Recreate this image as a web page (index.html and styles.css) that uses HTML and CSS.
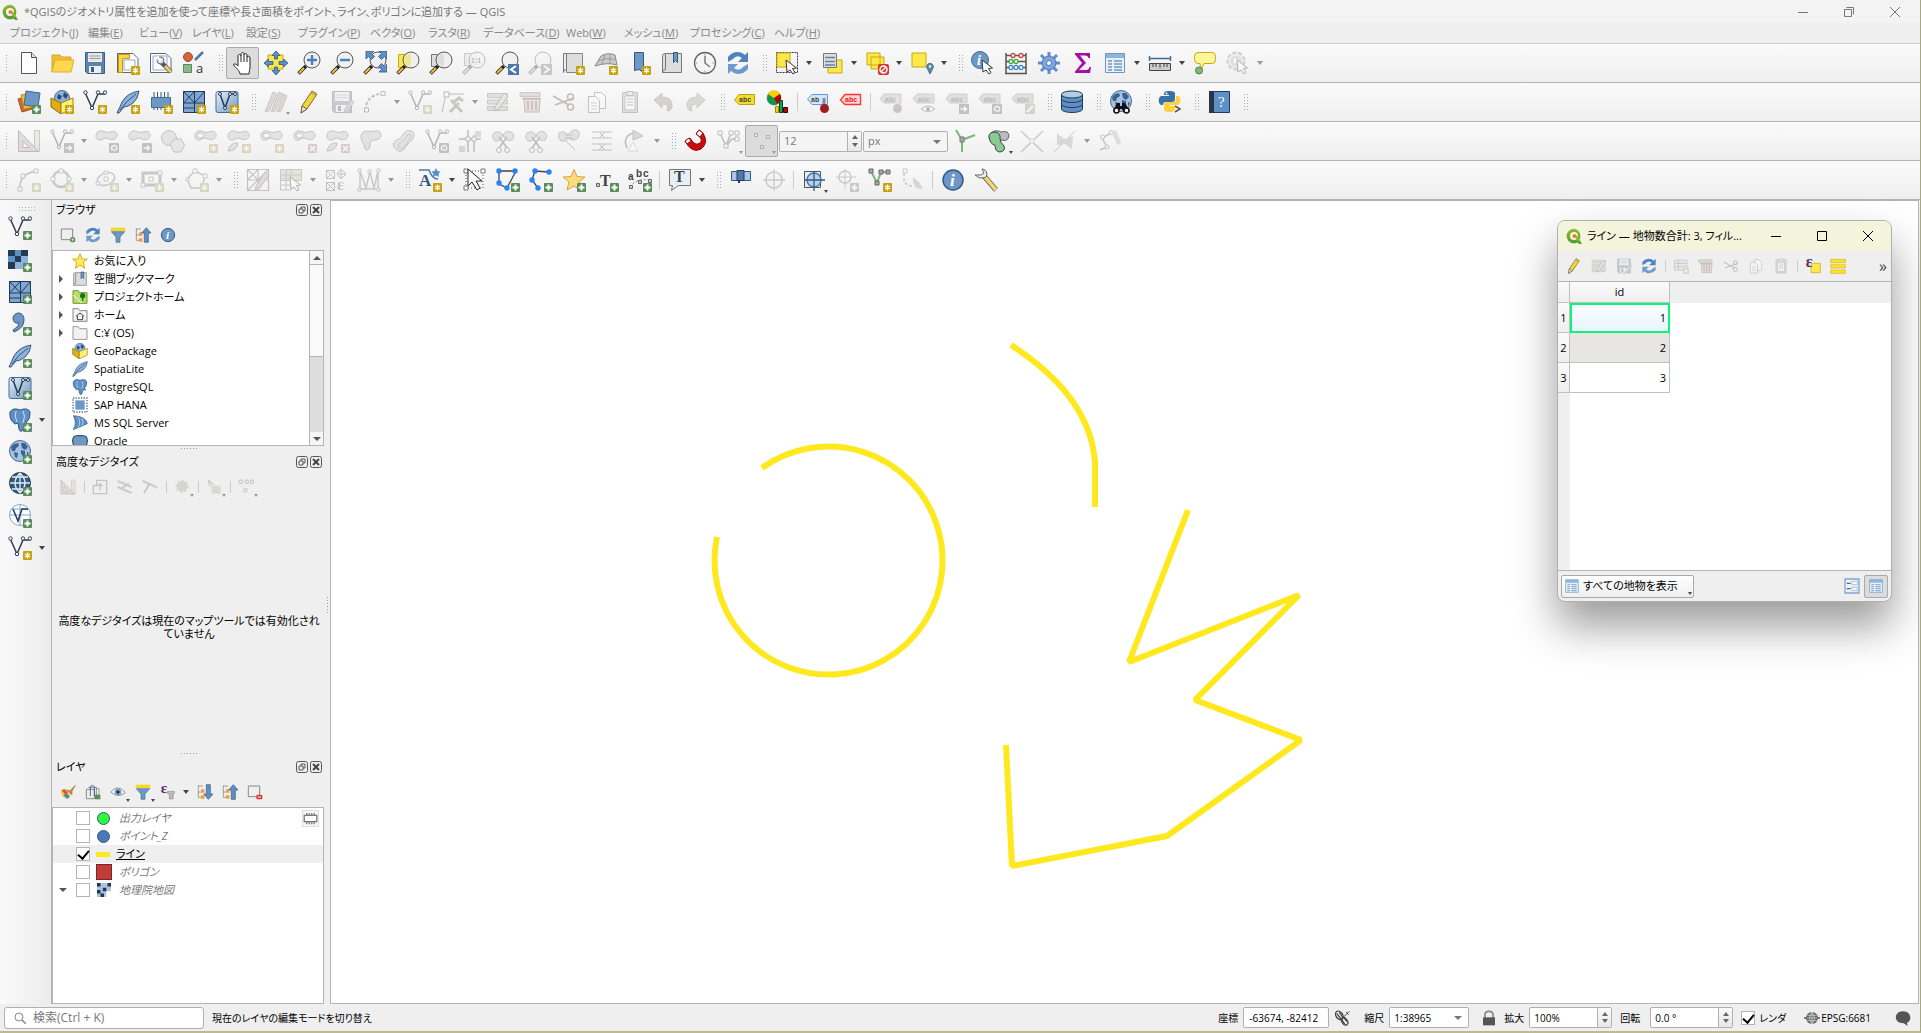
FILE: index.html
```
<!DOCTYPE html>
<html lang="ja">
<head>
    <meta charset="UTF-8">
    <meta name="viewport" content="width=device-width, initial-scale=1.0">
    <title>QGIS</title>
    <link rel="stylesheet" href="styles.css">
</head>
<body>
<svg class="gradients" aria-hidden="true">
    <defs>
        <linearGradient id="qg" x1="0" y1="0" x2="0" y2="1"><stop offset="0" stop-color="#8fb935"/><stop offset="1" stop-color="#4f9a35"/></linearGradient>
        <linearGradient id="bl" x1="0" y1="0" x2="1" y2="1"><stop offset="0" stop-color="#e8f0f8"/><stop offset="1" stop-color="#6d97c4"/></linearGradient>
    </defs>
</svg>
<svg class="sprite" aria-hidden="true">
    <!-- badges and shared parts -->
    <symbol id="b-new" viewBox="0 0 24 24"><rect x="15" y="15" width="9" height="9" rx="1" fill="#c8a20a"/><path d="M19.5 16.5v6M16.9 18l5.2 3M22.1 18l-5.2 3" stroke="#fff" stroke-width="1.3"/></symbol>
    <symbol id="b-add" viewBox="0 0 24 24"><rect x="15" y="15" width="9" height="9" rx="1" fill="#5a8c5a"/><path d="M19.5 16.5v6M16.5 19.5h6" stroke="#fff" stroke-width="2"/></symbol>
    <symbol id="b-go" viewBox="0 0 24 24"><rect x="14" y="14" width="10" height="10" rx="1" fill="#666"/><path d="M15.5 19h6M19 16.5l2.5 2.5-2.5 2.5" stroke="#fff" stroke-width="1.5" fill="none"/></symbol>
    <symbol id="b-rot" viewBox="0 0 24 24"><rect x="14" y="14" width="10" height="10" rx="1" fill="#666"/><path d="M17 20.5a2.6 2.6 0 1 1 2 1.2M16 18l1 3 2.5-1" stroke="#fff" stroke-width="1.3" fill="none"/></symbol>
    <symbol id="b-del" viewBox="0 0 24 24"><rect x="15" y="15" width="9" height="9" rx="1" fill="#c77"/><path d="M17 17l5 5M22 17l-5 5" stroke="#fff" stroke-width="1.6"/></symbol>
    <symbol id="cursor" viewBox="0 0 24 24"><path d="M11 9l1 12 3-2 3 4 2-1.5-2.5-4 4-.5z" fill="#fff" stroke="#333"/></symbol>
    <symbol id="vee" viewBox="0 0 24 24"><path d="M2.500 3.5L9 18l6-14h7" fill="none" stroke="#2b3b4e" stroke-width="1.5"/><g fill="#fff" stroke="#2b3b4e"><circle cx="2.5" cy="2.5" r="1.7"/><circle cx="9" cy="18" r="1.7"/><circle cx="15" cy="2.5" r="1.7"/><circle cx="22" cy="2.5" r="1.7"/></g></symbol>
    <symbol id="mag" viewBox="0 0 24 24"><path d="M9 15l-7.5 7.5" stroke="#222" stroke-width="3.5"/><path d="M7 17l-5 5" stroke="#f5c03c" stroke-width="2"/><circle cx="15" cy="9" r="8" fill="#eee" fill-opacity=".85" stroke="#555"/></symbol>
    <symbol id="blob" viewBox="0 0 24 24"><path d="M1 7C1 2 6 1 9 2.5s5 1 8 0 6 2 5 5-5 4-8 2.5-4-1-7 .5S1 11 1 7z" fill="#b9c4b9" stroke="#666"/></symbol>
    <symbol id="tagged" viewBox="0 0 24 24"><path d="M1 8.5L5 4h17v9H5z" fill="#b9b79c" stroke="#888"/><text x="6" y="11.5" class="abc">abc</text></symbol>

    <symbol id="logo" viewBox="0 0 24 24"><path fill="url(#qg)" fill-rule="evenodd" d="M12 1a11 11 0 1 0 5 20.8L20 24h4l-4-6.500A11 11 0 0 0 12 1zm0 5a6 6 0 1 1 0 12 6 6 0 0 1 0-12z"/><path d="M11 10h4l7 9-4 1z" fill="#8fb935"/><circle cx="12.5" cy="12" r="2.8" fill="#ee7913"/></symbol>

    <!-- project -->
    <symbol id="new" viewBox="0 0 24 24"><path d="M4.500 1.5h10l5 5v16h-15z" fill="#fff" stroke="#555"/><path d="M14.5 1.5v5h5" fill="#ddd" stroke="#555"/></symbol>
    <symbol id="open" viewBox="0 0 24 24"><path d="M2 21V4h8l2 2h9v3" fill="#f0bb35" stroke="#d9a520"/><path d="M2 21L5 9h19l-3 12z" fill="#ffd84f" stroke="#e0ad28"/></symbol>
    <symbol id="save" viewBox="0 0 24 24"><path d="M2.500 1.5h19v21h-17l-2-2z" fill="#5d84b0" stroke="#3d5e85"/><path d="M5 2h14v9H5z" fill="#e8e8e8"/><path d="M6.500 5h11M6.500 7.500h11" stroke="#999"/><path d="M6 15h12v7H6z" fill="#eee"/><path d="M8 16h3v5H8z" fill="#3d5e85"/></symbol>
    <symbol id="layout" viewBox="0 0 24 24"><path d="M1.500 2.500H17l5 5v14H1.500z" fill="#fff" stroke="#666"/><path d="M8 9h11v10H8z" fill="none" stroke="#8aa8e0"/><path d="M2.500 3.500h11v4h-7v14h-4z" fill="#fbd54a" stroke="#c79b12"/><use href="#b-new"/></symbol>
    <symbol id="layouts" viewBox="0 0 24 24"><path d="M1.500 2.500H17l5 5v14H1.500z" fill="#fff" stroke="#666"/><path d="M4 5h14v14H4z" fill="none" stroke="#8aa8e0"/><path d="M12 11l10 10" stroke="#555" stroke-width="4.5"/><path d="M16 15l6 6" stroke="#f0cf60" stroke-width="3"/><circle cx="11.5" cy="9.5" r="3.5" fill="#ddd" stroke="#666"/><path d="M8 6l4 4" stroke="#fff" stroke-width="2.5"/></symbol>
    <symbol id="style" viewBox="0 0 24 24"><circle cx="6" cy="6" r="4.5" fill="#d0683a" stroke="#a84a22"/><path d="M13 9l8-8" stroke="#4f78a8" stroke-width="2.5"/><path d="M1.500 13.500h8v8h-8z" fill="#8db88d" stroke="#5a8c5a"/><text x="14" y="22" class="letter">a</text></symbol>
    <symbol id="hand" viewBox="0 0 24 24"><path d="M9 23c0-3-4-6-6.500-9 0-2 3-1 4.500 1V5c0-2 2.500-2 3 0V3c.5-2 3-2 3 0v1c.5-2 3-2 3 0v2c1-1.500 3-1 3 1v9c0 3-1 4-1 7z" fill="#fff" stroke="#222"/><path d="M10 5v6M13 4v7M16 6v5" stroke="#222"/></symbol>
    <symbol id="pansel" viewBox="0 0 24 24"><path d="M4 4h15v14H4z" fill="#fde84a" stroke="#c9a90c"/><g fill="#5e8fc6" stroke="#32587f" stroke-width=".8"><path d="M12 0l4 4.500h-2.500V8h-3V4.500H8zM12 24l4-4.500h-2.500V16h-3v3.500H8zM0 12l4.500-4v2.500H9v3H4.500V16zM24 12l-4.500-4v2.500H15v3h4.500V16z"/></g></symbol>
    <symbol id="zin" viewBox="0 0 24 24"><use href="#mag"/><path d="M15 4v10M10 9h10" stroke="#4f7fb8" stroke-width="2.5"/></symbol>
    <symbol id="zout" viewBox="0 0 24 24"><use href="#mag"/><path d="M10 9h10" stroke="#4f7fb8" stroke-width="2.5"/></symbol>
    <symbol id="zfull" viewBox="0 0 24 24"><use href="#mag"/><g fill="#5e8fc6" stroke="#32587f" stroke-width=".8"><path d="M3 0h8L8.500 2.500l3 3-3 3-3-3L3 8zM24 0v8l-2.500-2.500-3 3-3-3 3-3L16 0zM24 21h-8l2.500-2.500-3-3 3-3 3 3L24 13z"/></g></symbol>
    <symbol id="zsel" viewBox="0 0 24 24"><path d="M2.500 3.500h12v13h-12z" fill="#fde84a" stroke="#c9a90c"/><use href="#mag"/><path d="M10 4h4.500v10H10l-2-5z" fill="#efe68e"/></symbol>
    <symbol id="zlay" viewBox="0 0 24 24"><path d="M2.500 3.500h12v12h-12z" fill="#ddd" stroke="#777"/><use href="#mag"/><path d="M10 4h4.500v10H10l-2-5z" fill="#ddd"/></symbol>
    <symbol id="znat" viewBox="0 0 24 24"><path d="M2.500 2.500h12v12h-12z" fill="#ddd" stroke="#777"/><use href="#mag"/><text x="9" y="12" class="abc">1:1</text></symbol>
    <symbol id="zlast" viewBox="0 0 24 24"><use href="#mag"/><path d="M13 13h11v11H13z" fill="#4f78a8"/><path d="M21 15l-5 3.500 5 3.500" stroke="#fff" stroke-width="2" fill="none"/></symbol>
    <symbol id="znext" viewBox="0 0 24 24"><use href="#mag"/><path d="M13 13h11v11H13z" fill="#777"/><path d="M16 15l5 3.500-5 3.500" stroke="#fff" stroke-width="2" fill="none"/></symbol>
    <symbol id="mapnew" viewBox="0 0 24 24"><path d="M5.500 2.500h16v19h-16z" fill="#ddd" stroke="#888"/><path d="M2.500 2.500h3v16q-3 0-3 3z" fill="#eee" stroke="#777"/><use href="#b-new"/></symbol>
    <symbol id="map3d" viewBox="0 0 24 24"><path d="M1 15L7 5q7-4 14-1l2 10q-10-3-22 1z" fill="#ccc" stroke="#888"/><path d="M4 10q9-4 18-1M11 3L8 13M16 3l0 10" fill="none" stroke="#999"/><use href="#b-new"/></symbol>
    <symbol id="bmnew" viewBox="0 0 24 24"><path d="M7.500 1.500h9v20l-4.500-3-4.500 1z" fill="#6d97c4" stroke="#32587f"/><use href="#b-new"/></symbol>
    <symbol id="bms" viewBox="0 0 24 24"><path d="M5.500 2.500h16v19h-19v-17q0-2 3-2z" fill="#ddd" stroke="#777"/><path d="M5.500 2.500v16q-3 0-3 3" fill="none" stroke="#777"/><path d="M13.500 1.500h4v10l-2-2-2 2z" fill="#6d97c4" stroke="#32587f"/></symbol>
    <symbol id="clock" viewBox="0 0 24 24"><circle cx="12" cy="12" r="10.5" fill="#f4f4f4" stroke="#666" stroke-width="1.3"/><path d="M12 5v7l5 4" fill="none" stroke="#777" stroke-width="1.5"/><path d="M12 2.500v2M12 19.500v2M2.500 12h2M19.500 12h2" stroke="#999"/></symbol>
    <symbol id="refresh" viewBox="0 0 24 24"><path d="M2 11V6q6-7 14-4l3 2 3-3v10H12l4-4q-5-4-9 1z" fill="#4f83bd"/><path d="M22 13v5q-6 7-14 4l-3-2-3 3V13h10l-4 4q5 4 9-1z" fill="#6d9bcd"/></symbol>
    <symbol id="select" viewBox="0 0 24 24"><path d="M1.500 1.500h21v20h-21z" fill="none" stroke="#333" stroke-dasharray="2 1"/><path d="M2 2h13v14H2z" fill="#fde84a" stroke="#c9a90c"/><use href="#cursor"/></symbol>
    <symbol id="selform" viewBox="0 0 24 24"><path d="M8 9h14v13H8z" fill="#fde84a" stroke="#c9a90c"/><path d="M3.500 2.500h13v14h-13z" fill="#ddd" stroke="#777"/><path d="M5 6.500h10M5 10.500h10M5 14h10" stroke="#5d84b0" stroke-width="1.4"/></symbol>
    <symbol id="desel" viewBox="0 0 24 24"><path d="M2 2h13v12H2zM6 6h13v12H6z" fill="#fde84a" stroke="#c9a90c"/><rect x="13" y="13" width="11" height="11" rx="2" fill="#d33"/><circle cx="18.5" cy="18.5" r="3.5" fill="none" stroke="#fff" stroke-width="1.5"/><path d="M16 21l5-5" stroke="#fff" stroke-width="1.5"/></symbol>
    <symbol id="selloc" viewBox="0 0 24 24"><path d="M2 2h14v14H2z" fill="#fde84a" stroke="#c9a90c"/><path d="M20 23l-3-6a3.300 3.300 0 1 1 6 0z" fill="#5c87a5" stroke="#46708e"/><circle cx="20" cy="15.5" r="1.2" fill="#fff"/></symbol>
    <symbol id="ident" viewBox="0 0 24 24"><circle cx="9" cy="9" r="8.5" fill="#6d97c4" stroke="#456c98"/><text x="6" y="14" class="info">i</text><use href="#cursor"/></symbol>
    <symbol id="abacus" viewBox="0 0 24 24"><path d="M2 2v20M22 2v20M1 22.500h22M2 4.500h20M2 10.500h20M2 16.500h20" stroke="#555" stroke-width="1.5"/><g fill="#fff" stroke-width="1.3"><circle cx="9" cy="4.500" r="2" stroke="#c44"/><circle cx="17" cy="4.500" r="2" stroke="#c44"/><circle cx="7" cy="10.500" r="2" stroke="#4a4"/><circle cx="12" cy="10.500" r="2" stroke="#4a4"/><circle cx="7" cy="16.500" r="2" stroke="#48c"/><circle cx="12" cy="16.500" r="2" stroke="#48c"/><circle cx="17" cy="16.500" r="2" stroke="#48c"/></g></symbol>
    <symbol id="gear" viewBox="0 0 24 24"><path d="M12 1v22M1 12h22M4 4l16 16M20 4L4 20" stroke="#5f8ccc" stroke-width="3"/><circle cx="12" cy="12" r="7" fill="#7ea6dc" stroke="#4878b8"/><circle cx="12" cy="12" r="2.5" fill="#fff" stroke="#4878b8"/></symbol>
    <symbol id="sigma" viewBox="0 0 24 24"><path d="M5 2h15v5h-1.500q-.5-2.500-3-2.500H10l6 7.500-7 7h7q3 0 3.500-3H21l-1 6H5v-1.500L12 12 5 3.500z" fill="#a50fa5"/></symbol>
    <symbol id="table" viewBox="0 0 24 24"><path d="M2.500 2.500h19v19h-19z" fill="#e8f1fa" stroke="#6d97c4"/><path d="M3 3h18v4H3z" fill="#8cb6e0"/><path d="M5 10h4M5 13h4M5 16h4M5 19h4M11 10h8M11 13h8M11 16h8M11 19h8" stroke="#6d97c4" stroke-width="1.3"/></symbol>
    <symbol id="measure" viewBox="0 0 24 24"><path d="M1.500 7.500h21M1.500 5v5M22.500 5v5" stroke="#456c98" stroke-width="1.5" fill="none"/><path d="M1.500 12.500h21v7h-21z" fill="#ccc" stroke="#444"/><path d="M5 13v3M8 13v3M12 13v4M16 13v3M19 13v3" stroke="#444"/></symbol>
    <symbol id="tip" viewBox="0 0 24 24"><path d="M5 1.500h14q3.500 0 3.500 4v3q0 4-3.500 4h-8l-3 7-1-7H5q-3.500 0-3.500-4v-3q0-4 3.500-4z" fill="#fff59a" stroke="#c9a90c"/><circle cx="6" cy="19.5" r="3.5" fill="#82b982" stroke="#4d7a4d"/></symbol>
    <symbol id="action" viewBox="0 0 24 24"><circle cx="10" cy="10" r="8.5" fill="#ddd" stroke="#888" stroke-width="2" stroke-dasharray="4 2"/><circle cx="10" cy="10" r="5.5" fill="#a9b8c8"/><path d="M8 7l5 3-5 3z" fill="#fff"/><use href="#cursor"/></symbol>

    <!-- layers and editing -->
    <symbol id="source" viewBox="0 0 24 24"><path d="M1 9l10-3 4 13-10 3z" fill="#d0683a" stroke="#a04a20"/><path d="M4 5l11-2 2 14-10 2z" fill="#f0c030" stroke="#b98f10"/><path d="M9 1l14 2-2 14-14-2z" fill="#6d97c4" stroke="#3f678f"/><use href="#b-add"/></symbol>
    <symbol id="gpkgbox" viewBox="0 0 24 24"><circle cx="12" cy="8" r="7.5" fill="#8fb2dc" stroke="#456c98"/><path d="M8 4l4 2-2 4-3-2zM14 2l4 3-2 4-3-3z" fill="#2b4a70"/><path d="M1 8l10 5v11L1 17z" fill="#e0b010" stroke="#8a6d08"/><path d="M11 13l12-5v10l-12 6z" fill="#fdf07a" stroke="#a5880c"/></symbol>
    <symbol id="gpkg" viewBox="0 0 24 24"><use href="#gpkgbox"/><use href="#b-new"/></symbol>
    <symbol id="vnew" viewBox="0 0 24 24"><use href="#vee"/><use href="#b-new"/></symbol>
    <symbol id="vadd" viewBox="0 0 24 24"><use href="#vee"/><use href="#b-add"/></symbol>
    <symbol id="quill" viewBox="0 0 24 24"><path d="M1 23Q4 17 6 12 11 3 23 1q-1 8-6 12-5 4-9 4l-5 6z" fill="#8fb2dc" stroke="#32587f"/><path d="M4 20Q9 12 20 4" fill="none" stroke="#32587f"/></symbol>
    <symbol id="quillnew" viewBox="0 0 24 24"><use href="#quill"/><use href="#b-new"/></symbol>
    <symbol id="quilladd" viewBox="0 0 24 24"><use href="#quill"/><use href="#b-add"/></symbol>
    <symbol id="chip" viewBox="0 0 24 24"><path d="M5 2v18M8.500 2v18M12 2v18M15.500 2v18M19 2v18" stroke="#32587f"/><path d="M2.500 7.500h19v10h-19z" fill="#6d97c4" stroke="#456c98"/><use href="#b-new"/></symbol>
    <symbol id="meshbase" viewBox="0 0 24 24"><path d="M1.500 1.500h21v21h-21z" fill="#7ea6d4" stroke="#223a55"/><path d="M1.500 13h21M12.500 1.500v21M1.500 18h11M1.500 1.500l11 11.500M12.500 1.500L1.500 13M22.500 1.500l-10 11.500" stroke="#223a55" fill="none"/></symbol>
    <symbol id="mesh" viewBox="0 0 24 24"><use href="#meshbase"/><use href="#b-new"/></symbol>
    <symbol id="meshadd" viewBox="0 0 24 24"><use href="#meshbase"/><use href="#b-add"/></symbol>
    <symbol id="vboxb" viewBox="0 0 24 24"><rect x="1" y="1.5" width="22" height="21" rx="2" fill="url(#bl)" stroke="#456c98"/><path d="M5 4l5 14 5-14h6" fill="none" stroke="#223a55" stroke-width="1.5"/><g fill="#fff" stroke="#223a55"><circle cx="5" cy="4" r="1.5"/><circle cx="10" cy="18" r="1.5"/><circle cx="15" cy="4" r="1.5"/><circle cx="20" cy="4" r="1.5"/></g></symbol>
    <symbol id="vbox" viewBox="0 0 24 24"><use href="#vboxb"/><use href="#b-new"/></symbol>
    <symbol id="vboxadd" viewBox="0 0 24 24"><use href="#vboxb"/><use href="#b-add"/></symbol>
    <symbol id="pencil" viewBox="0 0 24 24"><path d="M5 16L15 1l5 3-10 15-6 4z" fill="#efd63c" stroke="#7c6a2a"/><path d="M5 16l5 3-6 4z" fill="#f2e0c0" stroke="#666"/><path d="M14 2.500l5 3" stroke="#c8a850" stroke-width="2"/></symbol>
    <symbol id="pencils" viewBox="0 0 24 24"><path d="M1 22L9 2l4 2-8 17zM7 22l8-20 4 2-8 17zM13 22l7-18 3 2-6 15z" fill="#c99a8f" stroke="#777"/></symbol>
    <symbol id="saveedit" viewBox="0 0 24 24"><use href="#save"/><path d="M14 23l1-4 6-9 3 2-6 9z" fill="#d3a090" stroke="#777"/></symbol>
    <symbol id="arc" viewBox="0 0 24 24"><path d="M3 20Q2 6 20 3" fill="none" stroke="#555" stroke-width="2" stroke-dasharray="3 2"/><path d="M1.500 18h4v4h-4zM18 1.500h4v4h-4z" fill="#fff" stroke="#555"/></symbol>
    <symbol id="node" viewBox="0 0 24 24"><path d="M1 22L5 4h18" fill="none" stroke="#555"/><path d="M3 2h5v5H3z" fill="#fff" stroke="#444"/><path d="M9 22l9-9M10 10l11 12" stroke="#776" stroke-width="3"/><path d="M13 12l5-4 4 3" stroke="#776" stroke-width="3" fill="none"/></symbol>
    <symbol id="rows" viewBox="0 0 24 24"><path d="M1.500 3.500h20v4h-20zM1.500 10h20v4h-20zM1.500 16.500h20v4h-20z" fill="#c9c08a" stroke="#777"/><path d="M8 21l1-4 9-14 4 3-9 13z" fill="#ccc" stroke="#555"/></symbol>
    <symbol id="trash" viewBox="0 0 24 24"><path d="M1 2.500h20v4H1z" fill="#d8a8a0" stroke="#876"/><path d="M5 9h16l-1 13H6z" fill="#e8b8b0" stroke="#944"/><path d="M3 8.500h19M9 11v9M13 11v9M17 11v9" stroke="#944" stroke-width="1.5"/></symbol>
    <symbol id="cut" viewBox="0 0 24 24"><path d="M1 6l16 9M3 15L22 8" stroke="#555" stroke-width="1.5"/><circle cx="18.5" cy="7" r="3" fill="none" stroke="#944" stroke-width="1.5"/><circle cx="18.5" cy="17" r="3" fill="none" stroke="#944" stroke-width="1.5"/></symbol>
    <symbol id="copy" viewBox="0 0 24 24"><path d="M9.500 2.500h7l4 4v12h-11z" fill="#fff" stroke="#666"/><path d="M3.500 6.500h7l4 4v12h-11z" fill="#fff" stroke="#666"/><path d="M6 13h6M6 16h6M6 19h6" stroke="#999"/></symbol>
    <symbol id="paste" viewBox="0 0 24 24"><path d="M4.500 2.500h15v20h-15z" fill="#bbb" stroke="#666"/><path d="M7 6h10v14H7z" fill="#fff" stroke="#777"/><path d="M9 1.500h6v4H9zM9 9h6M9 12h6M9 15h6" fill="#ddd" stroke="#666"/></symbol>
    <symbol id="undo" viewBox="0 0 24 24"><path d="M3 10l8-7v4q11 0 10 10-1 4-5 4 3-7-5-7v4z" fill="#b98d72" stroke="#876"/></symbol>
    <symbol id="redo" viewBox="0 0 24 24"><path d="M21 10l-8-7v4Q2 7 3 17q1 4 5 4-3-7 5-7v4z" fill="#9aa893" stroke="#787"/></symbol>
    <symbol id="tag" viewBox="0 0 24 24"><path d="M1.500 10L6 4.500h15.500v10H6z" fill="#f4dc2c" stroke="#bfa10c"/><text x="6" y="12" class="abc">abc</text></symbol>
    <symbol id="diagram" viewBox="0 0 24 24"><circle cx="8" cy="8" r="7" fill="#0b9a4a" stroke="#555" stroke-width=".5"/><path d="M8 8L2 4a7 7 0 0 1 12 0z" fill="#fc0"/><path d="M8 8l6-4a7 7 0 0 1-3 10z" fill="#b00"/><path d="M9.500 16.500h3v6h-3z" fill="#fc0" stroke="#a80"/><path d="M13.500 10.500h3v12h-3z" fill="#0a5" stroke="#042"/><path d="M17.500 17.500h4v5h-4z" fill="#b00" stroke="#400"/></symbol>
    <symbol id="tagpin" viewBox="0 0 24 24"><path d="M1.500 9L6 4.500h15.500v10H6z" fill="#d5e7fb" stroke="#5b9ae0"/><text x="5" y="12" class="abc">ab</text><path d="M18 8v8" stroke="#888" stroke-width="3"/><circle cx="18.5" cy="18.5" r="4.5" fill="#9c1f1f"/></symbol>
    <symbol id="tagred" viewBox="0 0 24 24"><path d="M1.500 10L6 4.500h15.500v10H6z" fill="#ffd9d9" stroke="#f33" stroke-width="1.3"/><text x="6" y="12" class="abc red">abc</text></symbol>
    <symbol id="tagoff1" viewBox="0 0 24 24"><use href="#tagged"/><path d="M18 8v8" stroke="#ccc" stroke-width="3"/><circle cx="18.5" cy="18.5" r="4.5" fill="#a66"/></symbol>
    <symbol id="tagoff2" viewBox="0 0 24 24"><use href="#tagged"/><path d="M9 19q7-6 14 0-7 5-14 0z" fill="#fff" stroke="#555"/><circle cx="16" cy="19" r="2" fill="#555"/></symbol>
    <symbol id="tagoff3" viewBox="0 0 24 24"><use href="#tagged"/><use href="#b-go"/></symbol>
    <symbol id="tagoff4" viewBox="0 0 24 24"><use href="#tagged"/><use href="#b-rot"/></symbol>
    <symbol id="tagoff5" viewBox="0 0 24 24"><use href="#tagged"/><path d="M14 14h10v10H14z" fill="#998"/><path d="M16 22l6-6" stroke="#fff" stroke-width="2"/></symbol>
    <symbol id="db" viewBox="0 0 24 24"><path d="M1.500 4.500v15c2 4 19 4 21 0v-15z" fill="#5e8fc6" stroke="#223a55"/><path d="M1.500 9.500c2 4 19 4 21 0M1.500 14.500c2 4 19 4 21 0" fill="none" stroke="#223a55"/><ellipse cx="12" cy="4.5" rx="10.5" ry="3.5" fill="#b5cce6" stroke="#223a55"/></symbol>
    <symbol id="globeb" viewBox="0 0 24 24"><circle cx="12" cy="11" r="10.5" fill="#a4c2e4" stroke="#456c98"/><path d="M3 7l3-3 4-1 1 3-3 2-1 3-3 0zM6 12l4 1-1 5-2-1zM13 3l4 0 3 4-3 3-3-2zM13 10l4 1 0 4-2 2-2-4zM19 12l2 1-2 4z" fill="#3c5f8c"/></symbol>
    <symbol id="metasearch" viewBox="0 0 24 24"><use href="#globeb"/><path d="M4 21l4-8h3v3h2v-3h3l5 8-6 2-2-4h-2l-2 4z" fill="#111"/><circle cx="7.5" cy="20.5" r="2.5" fill="#fff" stroke="#111" stroke-width="1.5"/><circle cx="17.5" cy="20.5" r="2.5" fill="#fff" stroke="#111" stroke-width="1.5"/></symbol>
    <symbol id="python" viewBox="0 0 24 24"><path d="M11 1c5 0 6 1 6 3v5c0 2-1 3-3 3H8c-2 0-3 1-3 3H3c-3-1-3-8 0-9h8V5H6V4c0-2 1-3 5-3z" fill="#3873a6"/><path d="M12 22c-5 0-6-1-6-3v-4c0-2 1-3 3-3h6c2 0 3-1 3-3V6h2c3 1 3 8 0 9h-8v1h5v3c0 2-1 3-5 3z" fill="#ffd140"/><circle cx="8.5" cy="3.5" r="1" fill="#fff"/><path d="M17 16l5 3-5 3" fill="none" stroke="#555" stroke-width="1.5"/></symbol>
    <symbol id="help" viewBox="0 0 24 24"><path d="M2.500 1.500h20v21h-20z" fill="#5e8fc6" stroke="#223a55"/><path d="M2 1h5v22H2z" fill="#25364a"/><text x="11" y="17" class="q">?</text></symbol>

    <!-- advanced digitizing -->
    <symbol id="square" viewBox="0 0 24 24"><path d="M17.500 1.500h5v21h-5z" fill="#ddd6b0" stroke="#777"/><path d="M1.500 1.500l20 21h-20z" fill="#d8a8a0" stroke="#555"/><path d="M6 12l6 6.500H6z" fill="#fff" stroke="#555"/></symbol>
    <symbol id="vgo" viewBox="0 0 24 24"><use href="#vee"/><use href="#b-go"/></symbol>
    <symbol id="vrot" viewBox="0 0 24 24"><use href="#vee"/><use href="#b-rot"/></symbol>
    <symbol id="blobrot" viewBox="0 0 24 24"><use href="#blob"/><use href="#b-rot"/></symbol>
    <symbol id="blobgo" viewBox="0 0 24 24"><use href="#blob"/><use href="#b-go"/></symbol>
    <symbol id="simplify" viewBox="0 0 24 24"><circle cx="8" cy="9" r="7.5" fill="#bcc6bc" stroke="#666"/><path d="M13 10h7l3.500 6-3.500 7h-7l-3.500-7z" fill="#c8d0d8" stroke="#667"/></symbol>
    <symbol id="ringnew" viewBox="0 0 24 24"><use href="#blob"/><ellipse cx="6.5" cy="6.5" rx="3.5" ry="2.5" fill="#fff" stroke="#666"/><use href="#b-new"/></symbol>
    <symbol id="partnew" viewBox="0 0 24 24"><use href="#blob"/><path d="M1 22q2-9 10-8-1 8-10 8z" fill="#b9c4b9" stroke="#666"/><use href="#b-new"/></symbol>
    <symbol id="ringdel" viewBox="0 0 24 24"><use href="#blob"/><ellipse cx="6.5" cy="6.5" rx="3.5" ry="2.5" fill="#fff" stroke="#666"/><use href="#b-del"/></symbol>
    <symbol id="partdel" viewBox="0 0 24 24"><use href="#blob"/><path d="M1 22q2-9 10-8-1 8-10 8z" fill="#b9c4b9" stroke="#666"/><use href="#b-del"/></symbol>
    <symbol id="reshape" viewBox="0 0 24 24"><path d="M2 8q0-6 6-6 4 1 8 0 6-1 6 4 0 5-7 5-4 0-4 5 0 5-4 5-2-1-2-6-3-2-3-7z" fill="#b9c4b9" stroke="#666"/></symbol>
    <symbol id="offset" viewBox="0 0 24 24"><path d="M2 18q-2-6 5-8 3-2 5-6 3-4 8-2 4 4 0 9-4 3-7 8-5 7-11-1z" fill="#ccc" stroke="#666"/><path d="M6 18q-1-3 3-5 4-2 6-7 4-3 4 2-3 4-5 8-4 6-8 2z" fill="#b9c4b9" stroke="#777"/></symbol>
    <symbol id="splitp" viewBox="0 0 24 24"><path d="M1 10h22M10 1v22M16 6v17" stroke="#555" stroke-width="1.5"/><path d="M8 8h4v4H8zM14 8h4v4h-4z" fill="#fff" stroke="#555"/><path d="M17 2h6v6h-6z" fill="#aa9"/><path d="M1 17h6v6H1z" fill="#b99"/></symbol>
    <symbol id="scissors" viewBox="0 0 24 24"><path d="M12 6q-4-5-9-2-3 5 1 8 6 1 8-6 3-5 8-3 5 3 1 8-6 2-9-5z" fill="#b9c4b9" stroke="#666"/><path d="M8 8l8 11M16 8L8 19" stroke="#555" stroke-width="1.5"/><circle cx="8" cy="21" r="2.5" fill="none" stroke="#944"/><circle cx="16" cy="21" r="2.5" fill="none" stroke="#944"/></symbol>
    <symbol id="merge" viewBox="0 0 24 24"><path d="M11 6Q7 1 2 4q-2 5 2 8 5 1 7-3 5 4 10 0 3-5-1-8-5-1-9 5z" fill="#b9c4b9" stroke="#666"/><path d="M8 11l10 10M8 6h8M8 9h8" stroke="#666" fill="none"/></symbol>
    <symbol id="trim" viewBox="0 0 24 24"><path d="M2 3h20M2 9h20M2 15h20M2 21h20M9 3l6 6M15 3L9 9M9 15l6 6M15 15l-6 6" stroke="#666"/></symbol>
    <symbol id="rotpt" viewBox="0 0 24 24"><path d="M4 19Q-1 8 10 4" fill="none" stroke="#555" stroke-width="1.5"/><path d="M10 1v10l10-4z" fill="#9a9" stroke="#666"/><path d="M10 13l5 9H5z" fill="#fff" stroke="#aaa"/></symbol>
    <symbol id="magnet" viewBox="0 0 24 24"><path d="M1 12q7 13 16 8 8-6 2-16l-4-3-3 4 3 2q4 4 1 7-4 3-8-2l-2-3z" fill="#c80f0f" stroke="#900"/><path d="M1 12l2 3 4-3-2-3zM15 1l4 3-3 4-4-3z" fill="#fff" stroke="#a00"/></symbol>
    <symbol id="snapv" viewBox="0 0 24 24"><path d="M3 4l6 13 5-13M9 17l6-7h7" fill="none" stroke="#555" stroke-width="1.5"/><path d="M1 2h4v4H1zM12 2h4v4h-4zM18 2h4v4h-4zM18 8h4v4h-4zM7 15h4v4H7z" fill="#fff" stroke="#555"/></symbol>
    <symbol id="snapn" viewBox="0 0 24 24"><path d="M4.500 4.500h3v3h-3zM16.500 6.500h3v3h-3zM10.500 16.500h3v3h-3z" fill="#fff" stroke="#555"/></symbol>
    <symbol id="topo" viewBox="0 0 24 24"><path d="M2 1l6 10v12M8 11l13-5" fill="none" stroke="#79b979" stroke-width="2"/><path d="M6 8h4v5H6z" fill="#aaa" stroke="#777"/></symbol>
    <symbol id="overlap" viewBox="0 0 24 24"><path d="M4 4q5-4 10-1 8-2 8 4-1 6-8 4z" fill="#bbb" stroke="#666"/><path d="M2 9q-1-6 6-6 6 1 5 7 0 3 4 7 2 5-4 6-5 0-5-7-4 0-6-7z" fill="#8cc98c" stroke="#345"/></symbol>
    <symbol id="xsnap" viewBox="0 0 24 24"><path d="M1 2l22 21M23 2L1 23" stroke="#777" stroke-width="1.5"/><rect x="10" y="10" width="4" height="4" fill="#fff" stroke="#999"/></symbol>
    <symbol id="trace" viewBox="0 0 24 24"><path d="M1 23L22 2" stroke="#777"/><path d="M4 4l7 6 9-3-1 13-7-5-8 1z" fill="#a9a48c"/></symbol>
    <symbol id="tracing" viewBox="0 0 24 24"><path d="M2 21l7-3-5-9 9-5" fill="none" stroke="#666" stroke-width="1.5"/><circle cx="13" cy="3.5" r="2" fill="#fff" stroke="#666"/><circle cx="4.5" cy="8" r="2" fill="#fff" stroke="#666"/><circle cx="9" cy="18" r="2" fill="#fff" stroke="#666"/><path d="M13 3l5-2 5 12-1 3-3-1z" fill="#b9b491"/></symbol>

    <!-- shapes, mesh, annotations -->
    <symbol id="curve" viewBox="0 0 24 24"><path d="M3 21Q2 6 19 3" fill="none" stroke="#666" stroke-width="1.5"/><path d="M1 19h4v4H1zM4 6h4v4H4zM17 1h4v4h-4z" fill="#fff" stroke="#666"/><use href="#b-new"/></symbol>
    <symbol id="circle" viewBox="0 0 24 24"><circle cx="11" cy="11" r="8" fill="none" stroke="#777" stroke-width="2.5"/><path d="M9 1h4v4H9zM1 9h4v4H1zM17 9h4v4h-4z" fill="#fff" stroke="#777"/><use href="#b-new"/></symbol>
    <symbol id="ellipse" viewBox="0 0 24 24"><ellipse cx="11" cy="11" rx="9" ry="6" fill="none" stroke="#777" stroke-width="1.5" transform="rotate(-20 11 11)"/><path d="M9 9h4v4H9zM9 3h4v3H9zM1 14h4v3H1z" fill="#fff" stroke="#777"/><use href="#b-new"/></symbol>
    <symbol id="rect" viewBox="0 0 24 24"><path d="M3 5h17v12H3z" fill="none" stroke="#777" stroke-width="3"/><path d="M1 15h4v4H1zM18 3h4v4h-4zM9 9h4v4H9z" fill="#fff" stroke="#777"/><use href="#b-new"/></symbol>
    <symbol id="poly" viewBox="0 0 24 24"><path d="M10 3l10 5-3 12H6L2 11z" fill="none" stroke="#777" stroke-width="1.5"/><path d="M8 1h4v4H8zM18 6h4v4h-4zM1 10h3v3H1z" fill="#fff" stroke="#777"/><use href="#b-new"/></symbol>
    <symbol id="meshedit" viewBox="0 0 24 24"><path d="M1.500 1.500h21v21h-21zM1.500 12h21M12 1.500v21M1.500 1.500L12 12M12 1.500L1.500 12M22.500 1.500L12 12M1.500 22.500L12 12" stroke="#666" fill="none" stroke-width="1.2"/><path d="M9 22l1-4 9-14 4 3-9 13z" fill="#d3a090" stroke="#766"/></symbol>
    <symbol id="meshsel" viewBox="0 0 24 24"><path d="M1.500 1.500h21v11h-21z" fill="#cfc37a" stroke="#776"/><path d="M1.500 12v10h10M12 1.500v21M1.500 17H12M1.500 7h21M7 1v21" stroke="#777" fill="none"/><use href="#cursor"/></symbol>
    <symbol id="meshexp" viewBox="0 0 24 24"><path d="M2.500 2.500h8v8h-8zM2.500 14.500h8v8h-8zM2.500 2.500l8 8M10.500 2.500l-8 8M2.500 14.500l8 8M10.500 14.500l-8 8M17 1l5 5-5 5-4-5zM17 1v10M13 6h9" fill="none" stroke="#666"/><text x="13" y="22" class="eps">ε</text></symbol>
    <symbol id="meshpick" viewBox="0 0 24 24"><path d="M3 3l6 17 4-16 4 16 4-17v18H3z" fill="none" stroke="#777" stroke-width="1.5"/><path d="M1 1h3v3H1zM20 1h3v3h-3zM1 20h3v3H1zM20 20h3v3h-3zM11 2h3v3h-3z" fill="#fff" stroke="#777"/></symbol>
    <symbol id="annot" viewBox="0 0 24 24"><path d="M1 2h10q3 9 9 9" fill="none" stroke="#4f78a8" stroke-width="1.5"/><text x="1" y="18" class="bigA">A</text><path d="M18 0l1.500 3 3 .5-2 2.500.5 3-3-1.500L15 9l.5-3-2-2.500 3-.5z" fill="#5e8fc6"/><use href="#b-new"/></symbol>
    <symbol id="annsel" viewBox="0 0 24 24"><path d="M3 3h17v17H3z" fill="none" stroke="#555" stroke-dasharray="1 2"/><path d="M1 1h4v4H1zM18 1h4v4h-4zM1 18h4v4H1z" fill="#fff" stroke="#777"/><path d="M5 1v17l4-4 5 8 3-2-4-7h6z" fill="#fff" stroke="#222"/></symbol>
    <symbol id="annpoly" viewBox="0 0 24 24"><path d="M3 3h17l-9 17-8-4z" fill="none" stroke="#444" stroke-width="1.3"/><g fill="#2483ff"><circle cx="3" cy="3" r="2.7"/><circle cx="19" cy="3" r="2.7"/><circle cx="3" cy="15" r="2.7"/><circle cx="11" cy="20" r="2.7"/></g><use href="#b-add"/></symbol>
    <symbol id="annline" viewBox="0 0 24 24"><path d="M20 4L6 3 3 12l6 8" fill="none" stroke="#444" stroke-width="1.3"/><g fill="#2483ff"><circle cx="6" cy="3" r="2.7"/><circle cx="20" cy="4" r="2.7"/><circle cx="3" cy="12" r="2.7"/><circle cx="9" cy="20" r="2.7"/></g><use href="#b-add"/></symbol>
    <symbol id="annstar" viewBox="0 0 24 24"><path d="M12 1.500l3 7 8 .5-6 5 2 8-7-4-7 4 2-8-6-5 8-.5z" fill="#fbdb7d" stroke="#dca33a"/><use href="#b-add"/></symbol>
    <symbol id="anntext" viewBox="0 0 24 24"><text x="5" y="18" class="tee">T</text><path d="M1.500 15.500h3v3h-3z" fill="#ccc" stroke="#666"/><use href="#b-add"/></symbol>
    <symbol id="anncurve" viewBox="0 0 24 24"><path d="M2 19Q8 10 22 12" fill="none" stroke="#777" stroke-dasharray="2 2"/><text x="0" y="12" class="abc big">a</text><text x="8" y="9" class="abc big">b</text><text x="15" y="9" class="abc big">c</text><path d="M1.500 17.500h3v3h-3zM10.500 12.500h3v3h-3zM20.500 11.500h3v3h-3z" fill="#ccc" stroke="#666"/><use href="#b-add"/></symbol>
    <symbol id="annballoon" viewBox="0 0 24 24"><path d="M1.500 1.500h21v16h-12l-7 5 1-5h-3z" fill="#e3f0f7" stroke="#777"/><text x="6" y="14" class="tee">T</text></symbol>
    <symbol id="gpspen" viewBox="0 0 24 24"><path d="M2.500 3.500h19v9h-19z" fill="#a9c7e8" stroke="#32587f"/><path d="M8 2.500h7v10H8z" fill="#4f78a8" stroke="#223a55"/><path d="M10 12v3" stroke="#223a55" stroke-width="2"/></symbol>
    <symbol id="target" viewBox="0 0 24 24"><circle cx="12" cy="12" r="8" fill="none" stroke="#777" stroke-width="1.5"/><path d="M12 1v22M1 12h22" stroke="#777" stroke-width="1.3"/></symbol>
    <symbol id="gpsrect" viewBox="0 0 24 24"><path d="M2.500 3.500h16v16h-16z" fill="#e4eef8" stroke="#555"/><circle cx="12" cy="12" r="7" fill="#b9d2ee" stroke="#4f78a8" stroke-width="1.5"/><path d="M12 3v20M3 12h20" stroke="#32587f" stroke-width="1.3"/></symbol>
    <symbol id="gpsadd" viewBox="0 0 24 24"><circle cx="10" cy="9" r="6" fill="none" stroke="#777" stroke-width="1.5"/><path d="M10 1v20M1 9h20" stroke="#777"/><use href="#b-add"/></symbol>
    <symbol id="gpsv" viewBox="0 0 24 24"><path d="M3 3l6 12 4-11h8" fill="none" stroke="#79b979" stroke-width="2"/><path d="M1 1h4v4H1zM11 2h4v4h-4zM18 2h4v4h-4zM7 13h4v4H7z" fill="#aaa" stroke="#666"/><use href="#b-new"/></symbol>
    <symbol id="gpsbrush" viewBox="0 0 24 24"><path d="M3 5v8q3 5 8 5" fill="none" stroke="#777" stroke-width="1.5" stroke-dasharray="3 2"/><path d="M2 1h4v4H2z" fill="#fff" stroke="#777"/><path d="M12 9l6 5 4 7-7-1-3-6z" fill="#a9a08c"/></symbol>
    <symbol id="info" viewBox="0 0 24 24"><circle cx="12" cy="12" r="10" fill="#6d97c4" stroke="#335a86" stroke-width="1.5"/><text x="9" y="18" class="info big">i</text></symbol>
    <symbol id="wrench" viewBox="0 0 24 24"><path d="M10 8l12 14" stroke="#555" stroke-width="5"/><path d="M11 9l11 13" stroke="#f3d774" stroke-width="3.5"/><path d="M1 7q4 4 8 3l3-1 1-3q-1-5-5-5l2 4-3 2z" fill="#eee" stroke="#666"/></symbol>

    <!-- data source manager -->
    <symbol id="raster" viewBox="0 0 24 24"><path d="M0 2h20v19H0z" fill="#8fb2dc"/><path d="M0 2h7v6H0zM13 2h7v6h-7zM7 8h6v6H7zM0 14h7v7H0z" fill="#223a55"/><path d="M7 2h6v6H7zM0 8h7v6H0z" fill="#5e8fc6"/><use href="#b-add"/></symbol>
    <symbol id="comma" viewBox="0 0 24 24"><path d="M5 18q6-3 6-7-6 1-6-5 1-5 6-5 5 1 5 7 0 8-10 12z" fill="#6d97c4" stroke="#32587f"/><use href="#b-add"/></symbol>
    <symbol id="pgb" viewBox="0 0 24 24"><path d="M2 4Q5-1 12 2q8-3 10 2 1 6-4 11l3 1-5 1-1 5q-3 3-4-1l-1-6-3 1Q1 12 2 4z" fill="#5e8fc6" stroke="#32587f"/><path d="M8 3q-2 5 1 11M15 3q3 5 0 12" fill="none" stroke="#cfe0f2"/></symbol>
    <symbol id="pgadd" viewBox="0 0 24 24"><use href="#pgb"/><use href="#b-add"/></symbol>
    <symbol id="wms" viewBox="0 0 24 24"><use href="#globeb"/><use href="#b-add"/></symbol>
    <symbol id="wcs" viewBox="0 0 24 24"><circle cx="12" cy="11" r="10.5" fill="#32587f" stroke="#223a55"/><path d="M2 11h20M12 1v20M4 5h16M4 17h16M12 1Q2 11 12 21M12 1q10 10 0 20" fill="none" stroke="#e4eef8" stroke-width="1.3"/><use href="#b-add"/></symbol>
    <symbol id="wfs" viewBox="0 0 24 24"><circle cx="12" cy="11" r="10.5" fill="#fff" stroke="#7fa8d4"/><path d="M2 11h20M12 1v20M4 5h16" stroke="#7fa8d4"/><path d="M5 5l5 12 4-12h6" fill="none" stroke="#223a55" stroke-width="1.5"/><use href="#b-add"/></symbol>

    <!-- panels -->
    <symbol id="layadd" viewBox="0 0 24 24"><path d="M2 3h17v16H2z" fill="none" stroke="#888" stroke-width="1.5"/><circle cx="19" cy="19" r="4" fill="#5a8c5a"/><path d="M17 19h4M19 17v4" stroke="#fff"/></symbol>
    <symbol id="layrem" viewBox="0 0 24 24"><path d="M2 3h17v16H2z" fill="none" stroke="#888" stroke-width="1.5"/><rect x="14" y="16" width="9" height="7" rx="2" fill="#d33"/><path d="M16 19.500h5" stroke="#fff" stroke-width="1.5"/></symbol>
    <symbol id="filter" viewBox="0 0 24 24"><path d="M1 1h22v5H1z" fill="#f4d82c"/><path d="M2 7h20l-7 8v8H9v-8z" fill="#6d97c4" stroke="#456c98"/></symbol>
    <symbol id="collapse" viewBox="0 0 24 24"><path d="M2 2v18h4M2 3h7M2 12h4" fill="none" stroke="#777"/><path d="M6 8h5v5H6zM6 17h5v5H6z" fill="#ff9a2c"/><path d="M17 1l7 8h-4v14h-6V9h-4z" fill="#5e8fc6" stroke="#32587f"/></symbol>
    <symbol id="expand" viewBox="0 0 24 24"><path d="M2 2v18h4M2 3h7M2 12h4" fill="none" stroke="#777"/><path d="M6 8h5v5H6zM6 17h5v5H6z" fill="#ff9a2c"/><path d="M17 23l7-8h-4V1h-6v14h-4z" fill="#5e8fc6" stroke="#32587f"/></symbol>
    <symbol id="brush" viewBox="0 0 24 24"><path d="M1 11l7-4 8 8-4 7q-9 1-11-11z" fill="#f4d04a"/><path d="M2 9l5-1 5 5-4 3z" fill="#e0503a"/><path d="M5 17l5-3 5 5-4 3z" fill="#4f83bd"/><path d="M10 9l5 1 8-8-5 9 0 5z" fill="#c98a4a" stroke="#a8703a"/></symbol>
    <symbol id="group" viewBox="0 0 24 24"><path d="M2 8h12v14H2zM5 5h12v14" fill="none" stroke="#777" stroke-width="1.3"/><path d="M8 18V4q3-4 6 0v14" fill="none" stroke="#456c98" stroke-width="1.5"/><path d="M17 7h4v10" fill="none" stroke="#777"/><rect x="15" y="16" width="8" height="7" fill="#5a8c5a"/></symbol>
    <symbol id="eye" viewBox="0 0 24 24"><path d="M1 12q11-13 22 1-11 9-22-1z" fill="#eef3f8" stroke="#666"/><circle cx="12" cy="12" r="5" fill="#6d97c4"/><circle cx="12" cy="12" r="2" fill="#111"/></symbol>
    <symbol id="epsf" viewBox="0 0 24 24"><text x="1" y="14" class="eps big">ε</text><path d="M12 11h11v3l-2 2v7h-6v-7l-3-2z" fill="#bbb" stroke="#888"/></symbol>
    <symbol id="star" viewBox="0 0 24 24"><path d="M12 1l3 8h8l-6 5 2 9-7-5-7 5 2-9-6-5h8z" fill="#ffee5a" stroke="#d9a91a" stroke-width="1.5"/></symbol>
    <symbol id="prjhome" viewBox="0 0 24 24"><path d="M1.500 21.500v-19h8l2 3h11v16z" fill="#b9dc6a" stroke="#6f9a2a" stroke-width="1.5"/><path d="M2 9l12 12" stroke="#fff" stroke-width="1.5"/><circle cx="16" cy="10" r="4" fill="#0a7a1a"/><path d="M16 11v7" stroke="#0a7a1a" stroke-width="2"/></symbol>
    <symbol id="home" viewBox="0 0 24 24"><path d="M1.500 21.500v-19h8l2 3h11v16z" fill="#f2f2f2" stroke="#888" stroke-width="1.5"/><path d="M6 14l6-5 6 5M8 13v6h8v-6" fill="none" stroke="#444" stroke-width="1.5"/></symbol>
    <symbol id="folder" viewBox="0 0 24 24"><path d="M1.500 21.500v-19h8l2 3h11v16z" fill="#f2f2f2" stroke="#999" stroke-width="1.5"/></symbol>
    <symbol id="hana" viewBox="0 0 24 24"><path d="M1.500 1.500h21v21h-21z" fill="none" stroke="#456c98" stroke-width="2" stroke-dasharray="2 2"/><path d="M5 5h14v14H5z" fill="#6d97c4"/></symbol>
    <symbol id="mssql" viewBox="0 0 24 24"><path d="M2 1q19 1 21 12L2 22Q8 12 2 1z" fill="#5e8fc6" stroke="#32587f"/><path d="M9 3q5 8 0 16M15 5q3 6 0 11" fill="none" stroke="#dce8f4"/></symbol>
    <symbol id="oracle" viewBox="0 0 24 24"><rect x="1" y="4" width="22" height="16" rx="6" fill="#6d97c4" stroke="#223a55" stroke-width="1.5"/></symbol>
    <symbol id="memory" viewBox="0 0 24 24"><path d="M6 3v18M10 3v18M14 3v18M18 3v18" stroke="#777" stroke-width="2"/><rect x="2" y="7" width="20" height="10" fill="#fff" stroke="#777" stroke-width="2"/></symbol>
    <symbol id="float" viewBox="0 0 12 12"><rect x=".5" y=".5" width="11" height="11" rx="2" fill="none" stroke="#555"/><path d="M5 5V3h4v4H7M3 5h4v4H3z" fill="none" stroke="#555"/></symbol>
    <symbol id="close" viewBox="0 0 12 12"><rect x=".5" y=".5" width="11" height="11" rx="2" fill="none" stroke="#555"/><path d="M3 3l6 6M9 3L3 9" stroke="#444" stroke-width="2"/></symbol>
    <symbol id="cadrect" viewBox="0 0 24 24"><path d="M7 2h15v20H2V10h5z" fill="none" stroke="#777" stroke-width="2"/><path d="M12 17V8M8 11l4-4 4 4" stroke="#777" stroke-width="2" fill="none"/></symbol>
    <symbol id="parallel" viewBox="0 0 24 24"><path d="M1 3l21 9M1 12l21 9M5 15l13-8" stroke="#888" stroke-width="3"/></symbol>
    <symbol id="perp" viewBox="0 0 24 24"><path d="M1 3l22 10M3 21l8-13" stroke="#888" stroke-width="3"/></symbol>
    <symbol id="cadgear" viewBox="0 0 24 24"><circle cx="12" cy="11" r="8" fill="#a9a48c" stroke="#a9a48c" stroke-width="4" stroke-dasharray="3 3"/></symbol>
    <symbol id="cadtool" viewBox="0 0 24 24"><path d="M3 1l8 8M3 1l3 10" stroke="#888" stroke-width="2"/><path d="M8 10h14v12H8z" fill="#b9b491"/></symbol>
    <symbol id="cadpts" viewBox="0 0 24 24"><path d="M4 5l8 14 8-14" stroke="#aaa" fill="none" stroke-dasharray="2 2"/><g fill="#fff" stroke="#888" stroke-width="2"><circle cx="4" cy="4" r="2.5"/><circle cx="13" cy="4" r="2.5"/><circle cx="21" cy="4" r="2.5"/><circle cx="11" cy="17" r="2.5"/></g></symbol>
    <symbol id="tblnew" viewBox="0 0 24 24"><path d="M2 3h19v15H2zM2 8h19M2 13h19M8 3v15" fill="#ddd" stroke="#666"/><use href="#b-new"/></symbol>
    <symbol id="epssel" viewBox="0 0 24 24"><path d="M9 8h14v14H9z" fill="#fde84a" stroke="#c9a90c"/><text x="1" y="14" class="eps big">ε</text></symbol>
    <symbol id="selall" viewBox="0 0 24 24"><path d="M1 2h22v5H1zM1 10h22v5H1zM1 18h22v5H1z" fill="#fde22e" stroke="#d9b810"/></symbol>
    <symbol id="formview" viewBox="0 0 24 24"><path d="M1.500 1.500h21v21h-21z" fill="#eaf3fb" stroke="#7fa8d4" stroke-width="2"/><path d="M4 8h6M4 16h6" stroke="#666" stroke-width="2"/><path d="M12 5h8v5h-8zM12 14h8v5h-8z" fill="#fff" stroke="#7fa8d4"/></symbol>
    <symbol id="search" viewBox="0 0 12 12"><circle cx="5" cy="5" r="4" fill="none" stroke="#888"/><path d="M8 8l4 4" stroke="#888" stroke-width="1.5"/></symbol>
    <symbol id="extent" viewBox="0 0 24 24"><g fill="none" stroke="#444"><ellipse cx="8" cy="8" rx="5" ry="7" stroke-width="2" transform="rotate(-35 8 8)"/><path d="M4 5l6 8M8 3l5 8M10 12l6 9M14 10l5 7" stroke-width="2"/><ellipse cx="16" cy="17" rx="4" ry="6" stroke-width="2" transform="rotate(-35 16 17)"/><path d="M15 10l8-8M18 3l4 4" stroke-width="1.5"/></g></symbol>
    <symbol id="lock" viewBox="0 0 24 24"><path d="M6 12V7q0-5 6-5t6 5v5" fill="none" stroke="#888" stroke-width="2.5"/><path d="M3 11h18v12H3z" fill="#555"/></symbol>
    <symbol id="crs" viewBox="0 0 24 24"><circle cx="12" cy="12" r="9" fill="#666"/><path d="M4 12h16M12 3v18M5 8h14M5 16h14M12 3Q5 12 12 21M12 3q7 9 0 18" stroke="#ddd" fill="none"/><path d="M0 12h4M20 12h4" stroke="#555" stroke-width="2"/></symbol>
    <symbol id="bubble" viewBox="0 0 24 24"><path d="M12 2c14 0 13 16 6 17l1 5-6-4C-3 20-2 2 12 2z" fill="#555"/></symbol>
</svg>

<header class="titlebar">
    <svg class="logo"><use href="#logo"/></svg>
    <h1>*QGISのジオメトリ属性を追加を使って座標や長さ面積をポイント、ライン、ポリゴンに追加する — QGIS</h1>
    <div class="winbtns">
        <button aria-label="最小化"><svg viewBox="0 0 12 12"><path d="M1 6.500h10"/></svg></button>
        <button aria-label="元に戻す"><svg viewBox="0 0 12 12"><path d="M1.500 3.500h7v7h-7zM3.500 1.500h7v7"/></svg></button>
        <button aria-label="閉じる"><svg viewBox="0 0 12 12"><path d="M1 1l10 10M11 1L1 11"/></svg></button>
    </div>
</header>

<nav class="menu">
    <a href="#">プロジェクト(<u>J</u>)</a>
    <a href="#">編集(<u>E</u>)</a>
    <a href="#">ビュー(<u>V</u>)</a>
    <a href="#">レイヤ(<u>L</u>)</a>
    <a href="#">設定(<u>S</u>)</a>
    <a href="#">プラグイン(<u>P</u>)</a>
    <a href="#">ベクタ(<u>O</u>)</a>
    <a href="#">ラスタ(<u>R</u>)</a>
    <a href="#">データベース(<u>D</u>)</a>
    <a href="#">Web(<u>W</u>)</a>
    <a href="#">メッシュ(<u>M</u>)</a>
    <a href="#">プロセシング(<u>C</u>)</a>
    <a href="#">ヘルプ(<u>H</u>)</a>
</nav>

<div class="toolbar">
    <i class="grip"></i>
    <button class="tool"><svg><use href="#new"/></svg></button>
    <button class="tool"><svg><use href="#open"/></svg></button>
    <button class="tool"><svg><use href="#save"/></svg></button>
    <button class="tool"><svg><use href="#layout"/></svg></button>
    <button class="tool"><svg><use href="#layouts"/></svg></button>
    <button class="tool"><svg><use href="#style"/></svg></button>
    <i class="grip"></i>
    <button class="tool pressed"><svg><use href="#hand"/></svg></button>
    <button class="tool"><svg><use href="#pansel"/></svg></button>
    <button class="tool"><svg><use href="#zin"/></svg></button>
    <button class="tool"><svg><use href="#zout"/></svg></button>
    <button class="tool"><svg><use href="#zfull"/></svg></button>
    <button class="tool"><svg><use href="#zsel"/></svg></button>
    <button class="tool"><svg><use href="#zlay"/></svg></button>
    <button class="tool" disabled><svg><use href="#znat"/></svg></button>
    <button class="tool"><svg><use href="#zlast"/></svg></button>
    <button class="tool" disabled><svg><use href="#znext"/></svg></button>
    <button class="tool"><svg><use href="#mapnew"/></svg></button>
    <button class="tool"><svg><use href="#map3d"/></svg></button>
    <button class="tool"><svg><use href="#bmnew"/></svg></button>
    <button class="tool"><svg><use href="#bms"/></svg></button>
    <button class="tool"><svg><use href="#clock"/></svg></button>
    <button class="tool"><svg><use href="#refresh"/></svg></button>
    <i class="grip"></i>
    <button class="tool drop"><svg><use href="#select"/></svg></button>
    <button class="tool drop"><svg><use href="#selform"/></svg></button>
    <button class="tool drop"><svg><use href="#desel"/></svg></button>
    <button class="tool drop"><svg><use href="#selloc"/></svg></button>
    <i class="grip"></i>
    <button class="tool"><svg><use href="#ident"/></svg></button>
    <button class="tool"><svg><use href="#abacus"/></svg></button>
    <button class="tool"><svg><use href="#gear"/></svg></button>
    <button class="tool"><svg><use href="#sigma"/></svg></button>
    <button class="tool drop"><svg><use href="#table"/></svg></button>
    <button class="tool drop"><svg><use href="#measure"/></svg></button>
    <button class="tool"><svg><use href="#tip"/></svg></button>
    <button class="tool drop" disabled><svg><use href="#action"/></svg></button>
</div>

<div class="toolbar">
    <i class="grip"></i>
    <button class="tool"><svg><use href="#source"/></svg></button>
    <button class="tool"><svg><use href="#gpkg"/></svg></button>
    <button class="tool"><svg><use href="#vnew"/></svg></button>
    <button class="tool"><svg><use href="#quillnew"/></svg></button>
    <button class="tool"><svg><use href="#chip"/></svg></button>
    <button class="tool"><svg><use href="#mesh"/></svg></button>
    <button class="tool"><svg><use href="#vbox"/></svg></button>
    <i class="grip"></i>
    <button class="tool popup" disabled><svg><use href="#pencils"/></svg></button>
    <button class="tool"><svg><use href="#pencil"/></svg></button>
    <button class="tool" disabled><svg><use href="#saveedit"/></svg></button>
    <button class="tool drop" disabled><svg><use href="#arc"/></svg></button>
    <button class="tool" disabled><svg><use href="#vnew"/></svg></button>
    <button class="tool drop" disabled><svg><use href="#node"/></svg></button>
    <button class="tool" disabled><svg><use href="#rows"/></svg></button>
    <button class="tool" disabled><svg><use href="#trash"/></svg></button>
    <button class="tool" disabled><svg><use href="#cut"/></svg></button>
    <button class="tool" disabled><svg><use href="#copy"/></svg></button>
    <button class="tool" disabled><svg><use href="#paste"/></svg></button>
    <button class="tool" disabled><svg><use href="#undo"/></svg></button>
    <button class="tool" disabled><svg><use href="#redo"/></svg></button>
    <i class="grip"></i>
    <button class="tool"><svg><use href="#tag"/></svg></button>
    <button class="tool"><svg><use href="#diagram"/></svg></button>
    <i class="sep"></i>
    <button class="tool"><svg><use href="#tagpin"/></svg></button>
    <button class="tool"><svg><use href="#tagred"/></svg></button>
    <i class="sep"></i>
    <button class="tool" disabled><svg><use href="#tagoff1"/></svg></button>
    <button class="tool" disabled><svg><use href="#tagoff2"/></svg></button>
    <button class="tool" disabled><svg><use href="#tagoff3"/></svg></button>
    <button class="tool" disabled><svg><use href="#tagoff4"/></svg></button>
    <button class="tool" disabled><svg><use href="#tagoff5"/></svg></button>
    <i class="grip"></i>
    <button class="tool"><svg><use href="#db"/></svg></button>
    <i class="grip"></i>
    <button class="tool"><svg><use href="#metasearch"/></svg></button>
    <i class="grip"></i>
    <button class="tool"><svg><use href="#python"/></svg></button>
    <i class="grip"></i>
    <button class="tool"><svg><use href="#help"/></svg></button>
    <i class="grip"></i>
</div>

<div class="toolbar">
    <i class="grip"></i>
    <button class="tool" disabled><svg><use href="#square"/></svg></button>
    <button class="tool drop" disabled><svg><use href="#vgo"/></svg></button>
    <button class="tool" disabled><svg><use href="#blobrot"/></svg></button>
    <button class="tool" disabled><svg><use href="#blobgo"/></svg></button>
    <button class="tool" disabled><svg><use href="#simplify"/></svg></button>
    <button class="tool" disabled><svg><use href="#ringnew"/></svg></button>
    <button class="tool" disabled><svg><use href="#partnew"/></svg></button>
    <button class="tool" disabled><svg><use href="#ringnew"/></svg></button>
    <button class="tool" disabled><svg><use href="#ringdel"/></svg></button>
    <button class="tool" disabled><svg><use href="#partdel"/></svg></button>
    <button class="tool" disabled><svg><use href="#reshape"/></svg></button>
    <button class="tool" disabled><svg><use href="#offset"/></svg></button>
    <button class="tool" disabled><svg><use href="#vrot"/></svg></button>
    <button class="tool" disabled><svg><use href="#splitp"/></svg></button>
    <button class="tool" disabled><svg><use href="#scissors"/></svg></button>
    <button class="tool" disabled><svg><use href="#scissors"/></svg></button>
    <button class="tool" disabled><svg><use href="#merge"/></svg></button>
    <button class="tool" disabled><svg><use href="#trim"/></svg></button>
    <button class="tool drop" disabled><svg><use href="#rotpt"/></svg></button>
    <i class="grip"></i>
    <button class="tool"><svg><use href="#magnet"/></svg></button>
    <button class="tool popup" disabled><svg><use href="#snapv"/></svg></button>
    <button class="tool popup pressed" disabled><svg><use href="#snapn"/></svg></button>
    <div class="spin tolerance"><input type="text" value="12" aria-label="許容範囲" disabled><i></i></div>
    <div class="combo units"><select aria-label="単位" disabled><option>px</option></select></div>
    <button class="tool"><svg><use href="#topo"/></svg></button>
    <button class="tool popup"><svg><use href="#overlap"/></svg></button>
    <button class="tool" disabled><svg><use href="#xsnap"/></svg></button>
    <button class="tool drop" disabled><svg><use href="#trace"/></svg></button>
    <button class="tool" disabled><svg><use href="#tracing"/></svg></button>
</div>

<div class="toolbar">
    <i class="grip"></i>
    <button class="tool" disabled><svg><use href="#curve"/></svg></button>
    <button class="tool drop" disabled><svg><use href="#circle"/></svg></button>
    <button class="tool drop" disabled><svg><use href="#ellipse"/></svg></button>
    <button class="tool drop" disabled><svg><use href="#rect"/></svg></button>
    <button class="tool drop" disabled><svg><use href="#poly"/></svg></button>
    <i class="grip"></i>
    <button class="tool" disabled><svg><use href="#meshedit"/></svg></button>
    <button class="tool drop" disabled><svg><use href="#meshsel"/></svg></button>
    <button class="tool" disabled><svg><use href="#meshexp"/></svg></button>
    <button class="tool drop" disabled><svg><use href="#meshpick"/></svg></button>
    <i class="grip"></i>
    <button class="tool drop"><svg><use href="#annot"/></svg></button>
    <button class="tool"><svg><use href="#annsel"/></svg></button>
    <button class="tool"><svg><use href="#annpoly"/></svg></button>
    <button class="tool"><svg><use href="#annline"/></svg></button>
    <button class="tool"><svg><use href="#annstar"/></svg></button>
    <button class="tool"><svg><use href="#anntext"/></svg></button>
    <button class="tool"><svg><use href="#anncurve"/></svg></button>
    <i class="sep"></i>
    <button class="tool drop"><svg><use href="#annballoon"/></svg></button>
    <i class="grip"></i>
    <button class="tool"><svg><use href="#gpspen"/></svg></button>
    <button class="tool" disabled><svg><use href="#target"/></svg></button>
    <i class="sep"></i>
    <button class="tool popup"><svg><use href="#gpsrect"/></svg></button>
    <button class="tool" disabled><svg><use href="#gpsadd"/></svg></button>
    <button class="tool"><svg><use href="#gpsv"/></svg></button>
    <button class="tool" disabled><svg><use href="#gpsbrush"/></svg></button>
    <i class="sep"></i>
    <button class="tool"><svg><use href="#info"/></svg></button>
    <button class="tool"><svg><use href="#wrench"/></svg></button>
</div>

<main>
    <div class="sidebar">
        <i class="grip-h"></i>
        <button class="tool"><svg><use href="#vadd"/></svg></button>
        <button class="tool"><svg><use href="#raster"/></svg></button>
        <button class="tool"><svg><use href="#meshadd"/></svg></button>
        <button class="tool"><svg><use href="#comma"/></svg></button>
        <button class="tool"><svg><use href="#quilladd"/></svg></button>
        <button class="tool"><svg><use href="#vboxadd"/></svg></button>
        <button class="tool drop"><svg><use href="#pgadd"/></svg></button>
        <button class="tool"><svg><use href="#wms"/></svg></button>
        <button class="tool"><svg><use href="#wcs"/></svg></button>
        <button class="tool"><svg><use href="#wfs"/></svg></button>
        <button class="tool drop"><svg><use href="#vnew"/></svg></button>
    </div>

    <aside class="dock">
        <section class="panel browser">
            <div class="panel-title"><h2>ブラウザ</h2><button><svg><use href="#float"/></svg></button><button><svg><use href="#close"/></svg></button></div>
            <div class="minibar">
                <button class="mini"><svg><use href="#layadd"/></svg></button>
                <button class="mini"><svg><use href="#refresh"/></svg></button>
                <button class="mini"><svg><use href="#filter"/></svg></button>
                <button class="mini"><svg><use href="#collapse"/></svg></button>
                <button class="mini"><svg><use href="#info"/></svg></button>
            </div>
            <div class="tree-box">
                <ul class="tree">
                    <li><svg><use href="#star"/></svg>お気に入り</li>
                    <li class="branch"><svg><use href="#bms"/></svg>空間ブックマーク</li>
                    <li class="branch"><svg><use href="#prjhome"/></svg>プロジェクトホーム</li>
                    <li class="branch"><svg><use href="#home"/></svg>ホーム</li>
                    <li class="branch"><svg><use href="#folder"/></svg>C:¥ (OS)</li>
                    <li><svg><use href="#gpkgbox"/></svg>GeoPackage</li>
                    <li><svg><use href="#quill"/></svg>SpatiaLite</li>
                    <li><svg><use href="#pgb"/></svg>PostgreSQL</li>
                    <li><svg><use href="#hana"/></svg>SAP HANA</li>
                    <li><svg><use href="#mssql"/></svg>MS SQL Server</li>
                    <li><svg><use href="#oracle"/></svg>Oracle</li>
                </ul>
                <div class="scroll"><i class="up"></i><b></b><i class="down"></i></div>
            </div>
        </section>
        <i class="splitter"></i>
        <section class="panel digitize">
            <div class="panel-title"><h2>高度なデジタイズ</h2><button><svg><use href="#float"/></svg></button><button><svg><use href="#close"/></svg></button></div>
            <div class="minibar">
                <button class="mini" disabled><svg><use href="#square"/></svg></button>
                <i class="sep"></i>
                <button class="mini" disabled><svg><use href="#cadrect"/></svg></button>
                <button class="mini" disabled><svg><use href="#parallel"/></svg></button>
                <button class="mini" disabled><svg><use href="#perp"/></svg></button>
                <i class="sep"></i>
                <button class="mini popup" disabled><svg><use href="#cadgear"/></svg></button>
                <i class="sep"></i>
                <button class="mini popup" disabled><svg><use href="#cadtool"/></svg></button>
                <i class="sep"></i>
                <button class="mini popup" disabled><svg><use href="#cadpts"/></svg></button>
            </div>
            <p>高度なデジタイズは現在のマップツールでは有効化されていません</p>
        </section>
        <i class="splitter"></i>
        <section class="panel layers">
            <div class="panel-title"><h2>レイヤ</h2><button><svg><use href="#float"/></svg></button><button><svg><use href="#close"/></svg></button></div>
            <div class="minibar">
                <button class="mini"><svg><use href="#brush"/></svg></button>
                <button class="mini"><svg><use href="#group"/></svg></button>
                <button class="mini popup"><svg><use href="#eye"/></svg></button>
                <button class="mini popup"><svg><use href="#filter"/></svg></button>
                <button class="mini drop"><svg><use href="#epsf"/></svg></button>
                <button class="mini"><svg><use href="#expand"/></svg></button>
                <button class="mini"><svg><use href="#collapse"/></svg></button>
                <button class="mini"><svg><use href="#layrem"/></svg></button>
            </div>
            <div class="tree-box">
                <ul class="layer-list">
                    <li><input type="checkbox" id="l1"><i class="sym dot green"></i><label for="l1">出力レイヤ</label><svg class="memory"><use href="#memory"/></svg></li>
                    <li><input type="checkbox" id="l2"><i class="sym dot"></i><label for="l2">ポイント_Z</label></li>
                    <li class="current"><input type="checkbox" id="l3" checked><i class="sym line"></i><label for="l3">ライン</label></li>
                    <li><input type="checkbox" id="l4"><i class="sym fill"></i><label for="l4">ポリゴン</label></li>
                    <li class="open"><input type="checkbox" id="l5"><svg class="sym" viewBox="0 0 12 12"><path fill="#a9c4e4" d="M0 0h12v12H0z"/><path fill="#25364a" d="M0 0h3v3H0zM9 0h3v3H9zM5 4h3v3H5zM0 6h3v3H0zM3 9h3v3H3z"/><path fill="#fff" d="M8 7h4v5H8z"/></svg><label for="l5">地理院地図</label></li>
                </ul>
            </div>
        </section>
    </aside>
    <div class="dock-handle"></div>

    <div class="map">
        <svg>
            <g fill="none" stroke="#ffe81e" stroke-width="6" stroke-linejoin="bevel">
                <path d="M431 267A114 114 0 1 1 386 336"/>
                <path d="M680 144Q759 195 764 261V306"/>
                <polyline points="857,309 798,461 968,394 864,499 970,539 836,635 681,665 675,544"/>
            </g>
        </svg>
    </div>
</main>

<footer class="statusbar">
    <label class="locator"><svg><use href="#search"/></svg><input type="text" placeholder="検索(Ctrl + K)" aria-label="検索"></label>
    <span class="message">現在のレイヤの編集モードを切り替え</span>
    <label for="coord">座標</label>
    <input class="box" id="coord" type="text" value="-63674, -82412">
    <button class="mini"><svg><use href="#extent"/></svg></button>
    <label for="scale">縮尺</label>
    <div class="combo"><select id="scale"><option>1:38965</option></select></div>
    <button class="mini lock"><svg><use href="#lock"/></svg></button>
    <label for="zoom">拡大</label>
    <div class="spin"><input id="zoom" type="text" value="100%"><i></i></div>
    <label for="rotate" class="rotate">回転</label>
    <div class="spin"><input id="rotate" type="text" value="0.0 °"><i></i></div>
    <input type="checkbox" id="render" checked>
    <label for="render" class="render">レンダ</label>
    <button class="crs"><svg><use href="#crs"/></svg>EPSG:6681</button>
    <button class="mini"><svg><use href="#bubble"/></svg></button>
</footer>

<section class="attr-window">
    <div class="attr-title">
        <svg class="logo"><use href="#logo"/></svg>
        <h2>ライン — 地物数合計: 3, フィル...</h2>
        <div class="winbtns">
            <button aria-label="最小化"><svg viewBox="0 0 12 12"><path d="M1 6.500h10"/></svg></button>
            <button aria-label="最大化"><svg viewBox="0 0 12 12"><path d="M1.500 1.500h9v9h-9z"/></svg></button>
            <button aria-label="閉じる"><svg viewBox="0 0 12 12"><path d="M1 1l10 10M11 1L1 11"/></svg></button>
        </div>
    </div>
    <div class="minibar">
        <button class="mini"><svg><use href="#pencil"/></svg></button>
        <button class="mini" disabled><svg><use href="#rows"/></svg></button>
        <button class="mini" disabled><svg><use href="#saveedit"/></svg></button>
        <button class="mini"><svg><use href="#refresh"/></svg></button>
        <i class="sep"></i>
        <button class="mini" disabled><svg><use href="#tblnew"/></svg></button>
        <button class="mini" disabled><svg><use href="#trash"/></svg></button>
        <button class="mini" disabled><svg><use href="#cut"/></svg></button>
        <button class="mini" disabled><svg><use href="#copy"/></svg></button>
        <button class="mini" disabled><svg><use href="#paste"/></svg></button>
        <i class="sep"></i>
        <button class="mini"><svg><use href="#epssel"/></svg></button>
        <button class="mini"><svg><use href="#selall"/></svg></button>
        <button class="more">»</button>
    </div>
    <div class="attr-body">
        <table>
            <thead><tr><th></th><th>id</th></tr></thead>
            <tbody>
                <tr class="active"><th>1</th><td>1</td></tr>
                <tr class="alt"><th>2</th><td>2</td></tr>
                <tr><th>3</th><td>3</td></tr>
            </tbody>
        </table>
    </div>
    <div class="attr-foot">
        <button class="show-all popup"><svg><use href="#table"/></svg>すべての地物を表示</button>
        <button class="view"><svg><use href="#formview"/></svg></button>
        <button class="view pressed"><svg><use href="#table"/></svg></button>
    </div>
</section>
</body>
</html>
```
FILE: styles.css
```
* {
    box-sizing: border-box;
}

body {
    margin: 0;
    height: 100vh;
    display: flex;
    flex-direction: column;
    position: relative;
    overflow: hidden;
    font-family: "Open Sans", "Noto Sans CJK JP", sans-serif;
    font-size: 11px;
    font-feature-settings: "palt";
    line-height: 18px;
    color: #000;
    background: #efefef;
    border-right: 1px solid #a5a878;
    border-bottom: 2px solid #bdb995;
}

button,
input,
select {
    font: inherit;
    font-feature-settings: inherit;
    color: inherit;
}

button {
    border: 0;
    padding: 0;
    background: none;
}

h1,
h2 {
    margin: 0;
    font-size: 11px;
    font-weight: normal;
    white-space: nowrap;
}

.gradients {
    position: absolute;
    width: 0;
    height: 0;
}

.sprite {
    display: none;
}

/* letters inside icons */
.abc {
    font: bold 7px "Liberation Sans", sans-serif;
    fill: #444;
}

.abc.big {
    font-size: 10px;
}

.abc.red {
    fill: #e11;
}

.letter {
    font: 13px "Open Sans", sans-serif;
    fill: #333;
}

.info {
    font: italic bold 14px "Liberation Serif", serif;
    fill: #fff;
}

.info.big {
    font-size: 17px;
}

.q {
    font: 15px "Liberation Serif", serif;
    fill: #fff;
}

.eps {
    font: bold 16px "Liberation Serif", serif;
    fill: #666;
}

.eps.big {
    font-size: 24px;
    fill: #5c2a6e;
}

.bigA {
    font: bold 17px "Liberation Serif", serif;
    fill: #32587f;
}

.tee {
    font: bold 16px "Liberation Serif", serif;
    fill: #444;
}

/* title and menu */
.titlebar {
    display: flex;
    align-items: center;
    height: 23px;
    padding-left: 2px;
    background: #f3f3f3;
    color: #777;
}

.logo {
    width: 16px;
    height: 16px;
}

.titlebar h1 {
    flex: 1;
    margin-left: 6px;
}

.winbtns {
    display: flex;
}

.winbtns button {
    width: 46px;
    height: 23px;
    display: grid;
    place-items: center;
}

.winbtns svg {
    width: 12px;
    height: 12px;
    fill: none;
    stroke: currentColor;
}

.titlebar .winbtns {
    margin-right: 2px;
}

.menu {
    display: grid;
    grid-template-columns: 78px 51px 53px 54px 52px 72px 58px 55px 83px 58px 66px 84px 1fr;
    height: 21px;
    padding-left: 10px;
    border-bottom: 1px solid #cfcfcf;
    line-height: 20px;
}

.menu a {
    color: #888;
    text-decoration: none;
    white-space: nowrap;
}

/* toolbars */
.toolbar {
    display: flex;
    align-items: center;
    height: 39px;
    background: linear-gradient(#fafafa, #efefef);
    border-bottom: 1px solid #b4b4b4;
}

.grip {
    width: 16px;
    height: 18px;
    padding: 0 3px 0 8px;
    background: radial-gradient(circle, #aaa 30%, transparent 40%) 0 0 / 3px 3px content-box;
    background-clip: content-box;
}

.grip:first-child {
    width: 12px;
    padding: 0 4px 0 5px;
}

.sep {
    width: 7px;
    height: 18px;
    background: linear-gradient(#ccc, #ccc) center / 1px 100% no-repeat;
}

.tool {
    position: relative;
    width: 33px;
    height: 32px;
    flex: none;
    display: flex;
    align-items: center;
    padding-left: 4px;
    border: 1px solid transparent;
    border-radius: 2px;
}

.tool svg {
    width: 24px;
    height: 24px;
}

.tool:disabled svg,
.mini:disabled svg {
    filter: grayscale(0.6);
    opacity: 0.35;
}

.tool.pressed,
.view.pressed {
    background: #dcdcdc;
    border: 1px solid #aaa;
}

.drop {
    width: 45px;
}

.drop::after,
.popup::after {
    content: "";
    border: 3px solid transparent;
    border-top: 4px solid #444;
    border-bottom: 0;
}

.drop::after {
    margin-left: 7px;
}

.popup::after {
    position: absolute;
    right: 1px;
    bottom: 2px;
    border-width: 3px 2px 0;
}

.drop:disabled::after,
.popup:disabled::after {
    border-top-color: #999;
}

.spin,
.combo {
    position: relative;
    display: flex;
    width: 83px;
    height: 21px;
    border: 1px solid #b0b0b0;
    border-radius: 2px;
    background: #fff;
}

.spin input,
.combo select {
    flex: 1;
    min-width: 0;
    appearance: none;
    border: 0;
    padding: 0 4px;
    background: none;
    opacity: 1;
}

.spin i {
    width: 14px;
    border-left: 1px solid #b0b0b0;
    background: linear-gradient(#fafafa, #e8e8e8);
    display: flex;
    flex-direction: column;
    align-items: center;
    justify-content: space-evenly;
}

.spin i::before,
.spin i::after {
    content: "";
    border: 3px solid transparent;
    border-bottom: 4px solid #666;
    border-top: 0;
}

.spin i::after {
    border-top: 4px solid #666;
    border-bottom: 0;
}

.combo::after {
    content: "";
    position: absolute;
    right: 6px;
    top: 8px;
    border: 4px solid transparent;
    border-top: 4px solid #777;
    border-bottom: 0;
    pointer-events: none;
}

.tolerance,
.units {
    color: #777;
    background: #f4f4f4;
}

.tolerance {
    margin-left: 1px;
}

.units {
    width: 85px;
    margin: 0 1px;
}

/* main area */
main {
    flex: 1;
    min-height: 0;
    display: flex;
}

.sidebar {
    width: 51px;
    display: flex;
    flex-direction: column;
    background: linear-gradient(90deg, #fafafa, #ececec);
}

.grip-h {
    height: 12px;
    width: 18px;
    margin-left: 18px;
    padding: 6px 0 0;
    background: radial-gradient(circle, #aaa 30%, transparent 40%) 0 0 / 3px 3px content-box;
    background-clip: content-box;
}

.sidebar .tool {
    padding-left: 7px;
}

.sidebar .drop {
    width: 46px;
}

.dock {
    width: 275px;
    display: flex;
    flex-direction: column;
    border-left: 1px solid #b4b4b4;
}

.panel {
    display: flex;
    flex-direction: column;
    min-height: 0;
}

.browser {
    height: 246px;
}

.digitize {
    flex: 1;
}

.layers {
    height: 247px;
}

.panel-title {
    display: flex;
    align-items: center;
    gap: 2px;
    height: 20px;
    padding: 0 4px;
}

.panel-title h2 {
    flex: 1;
}

.panel-title svg {
    display: block;
    width: 12px;
    height: 12px;
}

.minibar {
    display: flex;
    align-items: center;
    height: 30px;
    padding-left: 4px;
}

.mini {
    position: relative;
    width: 25px;
    height: 24px;
    padding: 0 4px;
    display: flex;
    align-items: center;
}

.mini svg {
    width: 16px;
    height: 16px;
}

.mini.drop {
    width: 37px;
}

.mini.drop::after {
    margin-left: 8px;
}

.minibar .sep {
    height: 12px;
}

.tree-box {
    flex: 1;
    min-height: 0;
    display: flex;
    margin-right: 2px;
    border: 1px solid #b4b4b4;
    background: #fff;
    overflow: hidden;
}

.tree,
.layer-list {
    flex: 1;
    margin: 0;
    padding: 1px 0 0;
    list-style: none;
}

.tree li {
    display: flex;
    align-items: center;
    height: 18px;
    padding-left: 19px;
    white-space: nowrap;
}

.tree svg {
    width: 16px;
    height: 16px;
    margin-right: 6px;
}

.tree .branch {
    padding-left: 6px;
}

.branch::before {
    content: "";
    margin-right: 9px;
    border: 4px solid transparent;
    border-left: 4px solid #555;
    border-right: 0;
}

.scroll {
    width: 14px;
    display: flex;
    flex-direction: column;
    border-left: 1px solid #b4b4b4;
    background: #ddd;
}

.scroll i {
    height: 13px;
    display: grid;
    place-items: center;
    background: #f6f6f6;
}

.scroll b {
    height: 93px;
    margin-bottom: auto;
    background: #fafafa;
    border: solid #b4b4b4;
    border-width: 1px 0;
}

.scroll i::before {
    content: "";
    border: 4px solid transparent;
    border-bottom: 4px solid #555;
    border-top: 0;
}

.scroll .down::before {
    border-top: 4px solid #555;
    border-bottom: 0;
}

.splitter {
    height: 6px;
    width: 18px;
    align-self: center;
    background: radial-gradient(circle, #999 30%, transparent 40%) 0 1px / 3px 3px repeat-x;
}

.digitize p {
    flex: 1;
    display: grid;
    place-items: center;
    margin: 0;
    padding: 0 2px;
    text-align: center;
    line-height: 13px;
}

.layer-list li {
    display: flex;
    align-items: center;
    height: 18px;
    padding-left: 23px;
    font-style: italic;
    color: #777;
}

.layer-list .open {
    padding-left: 6px;
}

.open::before {
    content: "";
    margin-right: 9px;
    border: 4px solid transparent;
    border-top: 4px solid #555;
    border-bottom: 0;
}

.layer-list .current {
    background: #efefef;
    color: #000;
    font-style: normal;
    text-decoration: underline;
}

input[type="checkbox"] {
    appearance: none;
    width: 14px;
    height: 14px;
    margin: 0;
    border: 1px solid #b4b4b4;
    background: #fff;
}

input[type="checkbox"]:checked::before {
    content: "";
    display: block;
    width: 5px;
    height: 9px;
    margin: 0 0 0 3px;
    border: solid #000;
    border-width: 0 2px 2px 0;
    transform: rotate(40deg);
}

.sym {
    width: 14px;
    height: 14px;
    margin: 0 8px 0 7px;
}

.dot {
    border-radius: 50%;
    width: 13px;
    height: 13px;
    margin-right: 9px;
    background: #4a7ab5;
    border: 1px solid #35588a;
}

.dot.green {
    background: #2cfa3c;
}

.line {
    height: 5px;
    margin: 0 6px;
    background: #ffe81e;
}

.fill {
    width: 16px;
    height: 16px;
    margin: 0 7px 0 6px;
    background: #c43c39;
    border: 1px solid #7c2522;
}

.memory {
    width: 17px;
    height: 17px;
    margin-left: auto;
    margin-right: 4px;
    border: 1px solid #ddd;
    background: #f6f6f6;
}

.dock-handle {
    width: 4px;
    background: radial-gradient(circle, #999 30%, transparent 40%) 0 0 / 3px 3px repeat-y;
    background-clip: content-box;
    padding: 396px 0 390px;
}

.map {
    flex: 1;
    margin-right: 1px;
    border: 1px solid #b4b4b4;
    background: #fff;
}

.map svg {
    display: block;
    width: 100%;
    height: 100%;
}

/* status bar */
.statusbar {
    display: flex;
    align-items: center;
    height: 27px;
    padding: 0 4px;
    font-size: 10px;
}

.locator {
    display: flex;
    align-items: center;
    width: 200px;
    height: 22px;
    padding-left: 9px;
    border: 1px solid #b0b0b0;
    border-radius: 3px;
    background: #fff;
}

.locator svg {
    width: 12px;
    height: 12px;
}

.locator input {
    flex: 1;
    min-width: 0;
    border: 0;
    padding: 0 7px;
    font-size: 12px;
    background: none;
}

.locator input::placeholder {
    color: #777;
}

.message {
    margin: 0 auto 0 8px;
}

.statusbar > label:not(.locator) {
    margin-right: 5px;
}

.statusbar .box {
    width: 86px;
    height: 21px;
    margin-right: 1px;
    padding: 0 5px;
    border: 1px solid #b0b0b0;
    border-radius: 2px;
}

.statusbar .mini {
    margin-right: 9px;
}

.statusbar .combo {
    width: 80px;
    margin-right: 8px;
}

.statusbar .lock {
    margin-right: 2px;
}

.statusbar .spin {
    margin-right: 8px;
}

.statusbar input[type="checkbox"] {
    margin-right: 4px;
}

.statusbar > .rotate:not(.locator) {
    margin-right: 10px;
}

.statusbar > .render:not(.locator) {
    margin-right: 18px;
}

.crs {
    display: flex;
    align-items: center;
    margin-right: 20px;
}

.crs svg {
    width: 16px;
    height: 16px;
    margin-right: 1px;
}

.statusbar .mini:last-child {
    margin-right: 0;
}

/* floating attribute table */
.attr-window {
    position: absolute;
    top: 220px;
    right: 28px;
    width: 335px;
    height: 382px;
    display: flex;
    flex-direction: column;
    border: 1px solid #b0b0b0;
    border-radius: 8px;
    background: #efefef;
    box-shadow: 0 24px 44px rgba(0, 0, 0, 0.4);
    overflow: hidden;
}

.attr-title {
    display: flex;
    align-items: center;
    height: 30px;
    padding-left: 8px;
    background: #f4f4dc;
}

.attr-title h2 {
    flex: 1;
    margin-left: 5px;
}

.attr-window .minibar {
    height: 31px;
    border-bottom: 1px solid #b4b4b4;
}

.more {
    margin: 0 4px 0 auto;
    font-size: 16px;
    color: #444;
}

.attr-body {
    flex: 1;
    border-bottom: 1px solid #b4b4b4;
    background: linear-gradient(#efefef, #efefef) 0 0 / 100% 21px no-repeat, linear-gradient(90deg, #efefef 12px, #fff 12px);
}

table {
    border-collapse: separate;
    border-spacing: 0;
    table-layout: fixed;
    width: 112px;
}

th,
td {
    height: 30px;
    padding: 0;
    font-weight: normal;
    border: solid #c0c0c0;
    border-width: 0 1px 1px 0;
}

th {
    background: linear-gradient(#fafafa, #efefef);
}

thead th {
    height: 21px;
}

th:first-child {
    width: 12px;
}

td {
    padding-right: 3px;
    text-align: right;
}

.active td {
    border: 2px solid #0cf47c;
    background: linear-gradient(#fbfdff, #e8f4fd);
    padding-right: 2px;
}

.alt td {
    background: #e8e6e2;
}

.attr-foot {
    display: flex;
    align-items: center;
    height: 30px;
    padding: 0 3px;
}

.attr-foot svg {
    width: 16px;
    height: 16px;
}

.show-all {
    position: relative;
    display: flex;
    align-items: center;
    gap: 3px;
    width: 133px;
    height: 23px;
    margin-right: auto;
    padding-left: 2px;
    border: 1px solid #aaa;
    border-radius: 2px;
    background: linear-gradient(#fff, #efefef);
    white-space: nowrap;
}

.view {
    width: 24px;
    height: 23px;
    display: grid;
    place-items: center;
    border-radius: 2px;
}
```
